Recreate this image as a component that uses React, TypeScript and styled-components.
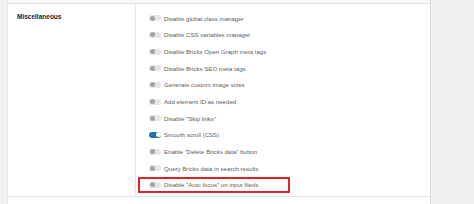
import React, { FC } from 'react';
import styled, { createGlobalStyle } from 'styled-components';

const GlobalStyle = createGlobalStyle`
  html, body {
    margin: 0;
    padding: 0;
    background: #ffffff;
  }
  body {
    font-family: "Liberation Sans", Arial, sans-serif;
  }
`;

interface Option {
  label: string;
  checked?: boolean;
  highlighted?: boolean;
}

const options: Option[] = [
  { label: 'Disable global class manager' },
  { label: 'Disable CSS variables manager' },
  { label: 'Disable Bricks Open Graph meta tags' },
  { label: 'Disable Bricks SEO meta tags' },
  { label: 'Generate custom image sizes' },
  { label: 'Add element ID as needed' },
  { label: 'Disable "Skip links"' },
  { label: 'Smooth scroll (CSS)', checked: true },
  { label: 'Enable "Delete Bricks data" button' },
  { label: 'Query Bricks data in search results' },
  { label: 'Disable "Auto focus" on input fileds', highlighted: true },
];

const App: FC = () => {
  return (
    <>
      <GlobalStyle />
      <Page>
        <LeftStrip />
        <Main>
          <SettingsTable>
            <LabelCell>Miscellaneous</LabelCell>
            <OptionsCell>
              {options.map(option => (
                <OptionRow key={option.label} highlighted={option.highlighted}>
                  <Toggle checked={option.checked}>
                    <Knob checked={option.checked} />
                  </Toggle>
                  <OptionLabel>{option.label}</OptionLabel>
                </OptionRow>
              ))}
            </OptionsCell>
          </SettingsTable>
        </Main>
        <Sidebar />
      </Page>
    </>
  );
};

export default App;

const Page = styled.div`
  display: flex;
  width: 474px;
  height: 204px;
  overflow: hidden;
`;

const LeftStrip = styled.div`
  width: 7px;
  flex-shrink: 0;
  background: #f0f0f1;
  border-right: 1px solid #e6e6e8;
`;

const Main = styled.div`
  flex: 1;
  padding-top: 3px;
  background: linear-gradient(#f6f7f7 0, #f6f7f7 3px, #ffffff 3px);
`;

const SettingsTable = styled.div`
  display: grid;
  grid-template-columns: 128px 1fr;
  background: #ffffff;
  border-top: 1px solid #e4e4e6;
  border-bottom: 1px solid #e4e4e6;
`;

const LabelCell = styled.div`
  padding: 9px 0 0 9px;
  border-right: 1px solid #e6e6e8;
  font-size: 6.5px;
  font-weight: 700;
  color: #1d2327;
`;

const OptionsCell = styled.div`
  padding: 6px 0 3px 2px;
`;

const OptionRow = styled.div<{ highlighted?: boolean }>`
  display: flex;
  align-items: center;
  gap: 3px;
  box-sizing: border-box;
  width: 152px;
  height: 16.67px;
  padding-left: 9px;
  border: 2px solid ${({ highlighted }) => (highlighted ? '#d9262b' : 'transparent')};
  white-space: nowrap;
`;

const Toggle = styled.span<{ checked?: boolean }>`
  position: relative;
  display: inline-block;
  flex-shrink: 0;
  width: 12px;
  height: 6px;
  border-radius: 3px;
  background: ${({ checked }) => (checked ? '#2271b1' : '#e6e6e8')};
`;

const Knob = styled.span<{ checked?: boolean }>`
  position: absolute;
  top: 0.5px;
  left: ${({ checked }) => (checked ? '6.5px' : '0.5px')};
  width: 5px;
  height: 5px;
  border-radius: 50%;
  background: ${({ checked }) => (checked ? '#ffffff' : '#a2a4a8')};
`;

const OptionLabel = styled.span`
  font-size: 6.1px;
  color: #5a6066;
`;

const Sidebar = styled.div`
  width: 43px;
  flex-shrink: 0;
  background: #efeff1;
  border-left: 1px solid #dcdcde;
`;
